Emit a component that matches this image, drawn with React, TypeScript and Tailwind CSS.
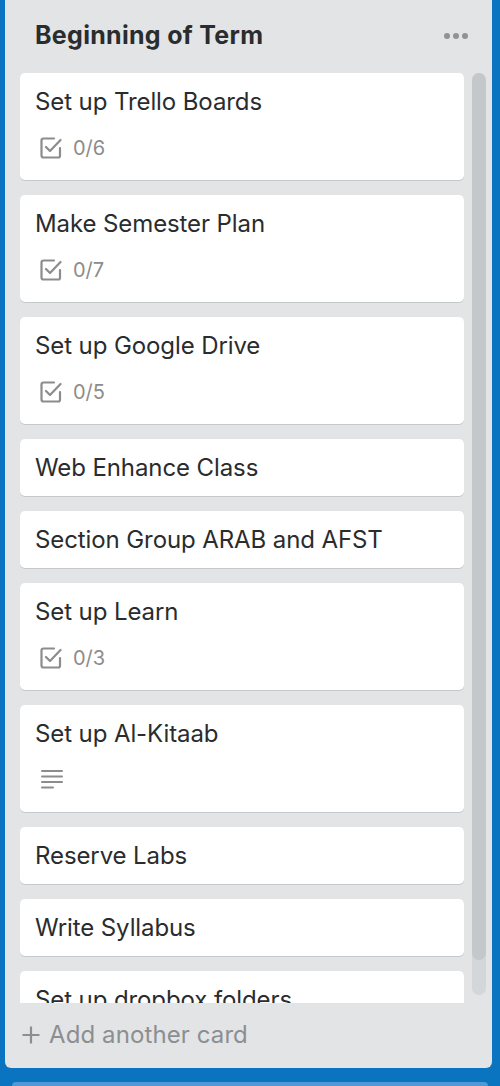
import React from "react";

type Card = { title: string; checklist?: string; desc?: boolean };

const cards: Card[] = [
  { title: "Set up Trello Boards", checklist: "0/6" },
  { title: "Make Semester Plan", checklist: "0/7" },
  { title: "Set up Google Drive", checklist: "0/5" },
  { title: "Web Enhance Class" },
  { title: "Section Group ARAB and AFST" },
  { title: "Set up Learn", checklist: "0/3" },
  { title: "Set up Al-Kitaab", desc: true },
  { title: "Reserve Labs" },
  { title: "Write Syllabus" },
  { title: "Set up dropbox folders" },
];

function CheckIcon() {
  return (
    <svg width="22" height="22" viewBox="0 0 22 22" fill="none">
      <path
        d="M20 11V18.5C20 19.6 19.6 20.5 18.5 20.5H3.5C2.4 20.5 1.5 19.6 1.5 18.5V3.5C1.5 2.4 2.4 1.5 3.5 1.5H14"
        stroke="#8c8c8c"
        strokeWidth="2.2"
        strokeLinecap="round"
      />
      <path d="M6 10L10 14L20.5 3" stroke="#8c8c8c" strokeWidth="2.2" strokeLinecap="round" strokeLinejoin="round" />
    </svg>
  );
}

function DescIcon() {
  return (
    <svg width="22" height="22" viewBox="0 0 22 22" fill="none">
      <rect x="0" y="1" width="22" height="2" rx="1" fill="#8c8c8c" />
      <rect x="0" y="6.5" width="22" height="2" rx="1" fill="#8c8c8c" />
      <rect x="0" y="12" width="22" height="2" rx="1" fill="#8c8c8c" />
      <rect x="0" y="17.5" width="13" height="2" rx="1" fill="#8c8c8c" />
    </svg>
  );
}

export default function App() {
  return (
    <div
      className="w-[500px] h-[1086px] bg-[#0a74c0] overflow-hidden flex flex-col"
      style={{ fontFamily: "Inter, 'Liberation Sans', sans-serif" }}
    >
      <div className="ml-[5px] mr-[8px] h-[1068px] shrink-0 bg-[#e2e4e6] rounded-b-[6px] flex flex-col">
        <div className="h-[73px] flex items-center justify-between pl-[30px] pr-[24px] pb-[1px]">
          <span className="text-[25px] font-bold text-[#2a2c2e] tracking-[0.3px]">Beginning of Term</span>
          <div className="flex gap-[3px]">
            <span className="w-[6px] h-[6px] rounded-full bg-[#8f9296]" />
            <span className="w-[6px] h-[6px] rounded-full bg-[#8f9296]" />
            <span className="w-[6px] h-[6px] rounded-full bg-[#8f9296]" />
          </div>
        </div>
        <div className="h-[930px] flex">
          <div className="ml-[15px] w-[444px] h-full overflow-hidden flex flex-col gap-[15px]">
            {cards.map((c) => (
              <div
                key={c.title}
                className="bg-white rounded-[5px] shadow-[0_1px_0_#c4c9cc] px-[15px] pt-[15px] pb-[14px] shrink-0"
              >
                <div className="text-[24px] leading-[28px] text-[#2a2c2e] tracking-[-0.1px]">{c.title}</div>
                {c.checklist && (
                  <div className="flex items-center gap-[11px] mt-[17px] mb-[3px] pl-[5px] h-[30px]">
                    <CheckIcon />
                    <span className="text-[20px] text-[#8c8c8c]">{c.checklist}</span>
                  </div>
                )}
                {c.desc && (
                  <div className="flex items-center mt-[17px] mb-[3px] pl-[6px] h-[30px]">
                    <DescIcon />
                  </div>
                )}
              </div>
            ))}
          </div>
          <div className="ml-[8px] w-[14px] h-[922px] bg-[#d4d7da] rounded-full flex flex-col">
            <div className="h-[887px] bg-[#c3c8cb] rounded-full" />
          </div>
        </div>
        <div className="flex-1 flex items-center pl-[17px] pb-[2px]">
          <svg width="18" height="18" viewBox="0 0 18 18" className="mr-[9px]">
            <path d="M9 0.5V17.5M0.5 9H17.5" stroke="#8c8e91" strokeWidth="2.2" />
          </svg>
          <span className="text-[24px] text-[#8c8e91] tracking-[0.1px]">Add another card</span>
        </div>
      </div>
      <div className="mt-[14px] ml-[12px] mr-[12px] flex-1 bg-[#4f9ad3] rounded-t-[6px]" />
    </div>
  );
}
